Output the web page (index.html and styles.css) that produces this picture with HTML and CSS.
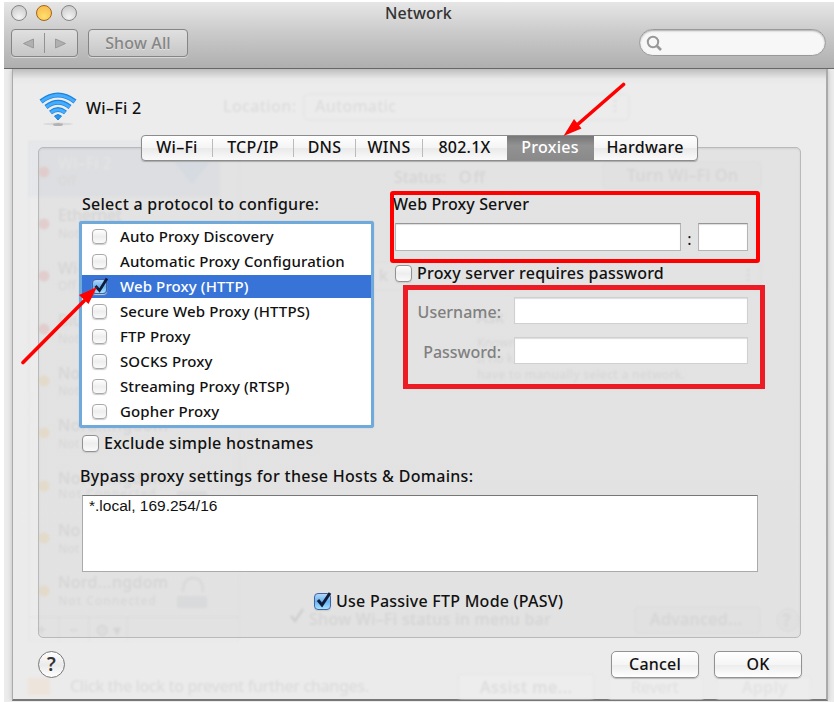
FILE: index.html
```html
<!DOCTYPE html>
<html lang="en">
<head>
<meta charset="utf-8">
<title>Network</title>
<link rel="stylesheet" href="styles.css">
</head>
<body>
<div class="window">
  <header class="titlebar">
    <div class="titlerow">
      <div class="lights"><i class="light"></i><i class="light amber"></i><i class="light"></i></div>
      <h1 class="title">Network</h1>
    </div>
    <div class="toolbar">
      <div class="toolbtn nav">
        <svg width="64" height="25" viewBox="0 0 64 25"><path d="M11.500 13.500l10-4.500v9z" fill="#b0b0b0" stroke="#999"/><path d="M32.500 3v20" stroke="#929292"/><path d="M53.500 13.500l-10-4.500v9z" fill="#b0b0b0" stroke="#999"/></svg>
      </div>
      <div class="toolbtn showall"><span>Show All</span></div>
      <div class="search">
        <svg width="18" height="18" viewBox="0 0 18 18" fill="none" stroke="#989898"><circle cx="7" cy="7" r="5.200" stroke-width="2"/><path d="M11 11l4 4" stroke-width="2.600"/></svg>
      </div>
    </div>
  </header>

  <main class="sheet">
    <svg class="ghost" width="815" height="631" viewBox="12 69 815 631">
      <g class="blur">
        <rect x="28" y="141" width="210" height="500" fill="none" stroke="#e3e3e3"/>
        <rect x="27" y="141" width="192" height="56" fill="#ccd5e2" opacity=".4"/>
        <rect x="303" y="94" width="325" height="26" rx="5" fill="none" stroke="#e2e2e2" stroke-width="2"/>
        <rect x="602" y="162" width="158" height="26" rx="4" fill="#eaeaea" stroke="#ddd"/>
        <rect x="300" y="262" width="460" height="28" rx="4" fill="none" stroke="#dfdfdf"/>
        <rect x="634" y="607" width="125" height="26" rx="4" fill="#eaeaea" stroke="#dcdcdc"/>
        <circle cx="787" cy="620" r="11" fill="#e8e8e8" stroke="#d8d8d8"/>
        <rect x="457" y="674" width="136" height="26" rx="4" fill="#efefef" stroke="#ddd"/>
        <rect x="608" y="676" width="94" height="26" rx="4" fill="#efefef" stroke="#e2e2e2"/>
        <rect x="716" y="676" width="94" height="26" rx="4" fill="#efefef" stroke="#e2e2e2"/>
        <path d="M28 617h210M58 617v24M88 617v24M126 617v24" stroke="#dadada"/>
        <path d="M173 162q18-13 36 0l-18 22z" fill="#c4d8e8" opacity=".6"/>
        <g fill="#eab3b3" opacity=".75"><circle cx="43" cy="172" r="5.500"/><circle cx="43" cy="224" r="5.500"/><circle cx="43" cy="276" r="5.500"/><circle cx="43" cy="329" r="5.500"/></g>
        <g fill="#eed6a9" opacity=".75"><circle cx="43" cy="381" r="5.500"/><circle cx="43" cy="433" r="5.500"/><circle cx="43" cy="486" r="5.500"/><circle cx="43" cy="538" r="5.500"/><circle cx="43" cy="591" r="5.500"/><rect x="27" y="678" width="22" height="17" fill="#f0d9c4"/></g>
        <g fill="#d9dbdf">
          <path d="M176 596h30v12h-30z"/><path d="M182 592q0-14 10-14t10 14" fill="none" stroke="#dcdcdc" stroke-width="3"/>
          <path d="M176 491h30v8h-30z"/>
          <path d="M290 616l4 5 8-12" fill="none" stroke="#c2c2c2" stroke-width="2.500"/>
        </g>
      </g>
      <g class="blurtext">
        <text x="222" y="112" textLength="73">Location:</text><text x="314" y="112" textLength="81">Automatic</text>
        <text x="612" y="112">⁝</text>
        <text x="393" y="183" textLength="52">Status:</text><text x="458" y="183" textLength="26">Off</text>
        <text x="626" y="181" textLength="111">Turn Wi–Fi On</text>
        <text x="57" y="169" fill="#eeeeee" textLength="54">Wi–Fi 2</text><text class="small" x="57" y="185" fill="#eee">Off</text>
        <text x="57" y="221" textLength="64">Ethernet</text><text class="small" x="57" y="238">Not</text>
        <text x="57" y="274">Wi–</text><text class="small" x="57" y="290">Off</text>
        <text x="57" y="326">Blu</text><text class="small" x="57" y="343">Not</text>
        <text x="57" y="379">No</text><text class="small" x="57" y="395">Not</text>
        <text x="57" y="431" textLength="110">Nord...ngdom</text><text class="small" x="57" y="448">Not</text>
        <text x="57" y="484" textLength="110">Nord...ngdom</text><text class="small" x="57" y="498" textLength="98">Not Connected</text>
        <text x="57" y="536">No</text><text class="small" x="57" y="553">Not</text>
        <text x="57" y="588" textLength="110">Nord...ngdom</text><text class="small" x="57" y="605" textLength="98">Not Connected</text>
        <text x="36" y="636">+</text><text x="68" y="636">−</text><text x="94" y="636">⚙ ▾</text>
        <text x="378" y="281">k</text><text x="745" y="281">⁝</text>
        <text x="476" y="323">Ask</text>
        <text class="small" x="476" y="347">Known</text>
        <text class="small" x="476" y="363">If no k</text>
        <text class="small" x="476" y="379" textLength="208">have to manually select a network.</text>
        <text x="308" y="625" textLength="242">Show Wi–Fi status in menu bar</text>
        <text x="649" y="625" textLength="92">Advanced...</text><text x="782" y="626">?</text>
        <text x="69" y="692" textLength="299">Click the lock to prevent further changes.</text>
        <text x="479" y="693" textLength="92">Assist me...</text>
        <text x="630" y="693" textLength="48" opacity=".6">Revert</text><text x="741" y="693" textLength="45" opacity=".6">Apply</text>
      </g>
    </svg>

    <div class="service">
      <svg width="40" height="38" viewBox="0 0 40 38" fill="none">
        <ellipse cx="20" cy="33" rx="15" ry="1.500" fill="#dadada"/><ellipse cx="20" cy="33.500" rx="5" ry="1.500" fill="#b2b2b2"/>
        <g stroke="#1e83dc" stroke-width="4.800"><path d="M3 10.500Q20-2.500 37 10.500"/><path d="M8 16Q20 6.500 32 16"/><path d="M12.500 21.500Q20 15.500 27.500 21.500"/></g>
        <g stroke="#43adff" stroke-width="3"><path d="M3.500 10.500Q20-2 36.500 10.500"/><path d="M8.500 16Q20 7 31.500 16"/><path d="M13 21.500Q20 16 27 21.500"/></g>
        <path d="M16.500 25q3.500-3 7 0L20 29z" fill="#2596f2" stroke="#1e83dc"/>
      </svg>
      <span class="svcname">Wi–Fi 2</span>
    </div>

    <section class="group">
      <nav class="tabs">
        <span class="tab t1">Wi–Fi</span><span class="tab t2">TCP/IP</span><span class="tab t3">DNS</span><span class="tab t4">WINS</span><span class="tab t5">802.1X</span><span class="tab t6 active">Proxies</span><span class="tab t7">Hardware</span>
      </nav>

      <div class="columns">
        <div class="protocols">
          <div class="label l-select">Select a protocol to configure:</div>
          <ul class="list">
            <li><i class="check"></i><span>Auto Proxy Discovery</span></li>
            <li><i class="check"></i><span>Automatic Proxy Configuration</span></li>
            <li class="selected"><i class="check on"><svg width="20" height="20" viewBox="0 0 20 20"><path d="M4.500 10l4 4.500 7.500-12" fill="none" stroke="#101d38" stroke-width="2.800"/></svg></i><span>Web Proxy (HTTP)</span></li>
            <li><i class="check"></i><span>Secure Web Proxy (HTTPS)</span></li>
            <li><i class="check"></i><span>FTP Proxy</span></li>
            <li><i class="check"></i><span>SOCKS Proxy</span></li>
            <li><i class="check"></i><span>Streaming Proxy (RTSP)</span></li>
            <li><i class="check"></i><span>Gopher Proxy</span></li>
          </ul>
        </div>
        <div class="settings">
          <div class="server">
            <div class="label l-server">Web Proxy Server</div>
            <div class="hostrow"><div class="field host"></div><span class="colon">:</span><div class="field port"></div></div>
          </div>
          <div class="option auth"><i class="check big"></i><span class="l-auth">Proxy server requires password</span></div>
          <div class="login">
            <div class="loginrow"><label>Username:</label><div class="field dim"></div></div>
            <div class="loginrow"><label>Password:</label><div class="field dim"></div></div>
          </div>
        </div>
      </div>

      <div class="option exclude"><i class="check big"></i><span class="l-excl">Exclude simple hostnames</span></div>
      <div class="label bypass">Bypass proxy settings for these Hosts &amp; Domains:</div>
      <div class="textarea">*.local, 169.254/16</div>
      <div class="option passive"><i class="check big on"><svg width="20" height="20" viewBox="0 0 20 20"><path d="M5 10l4 5 8-12" fill="none" stroke="#101d38" stroke-width="3"/></svg></i><span class="l-pasv">Use Passive FTP Mode (PASV)</span></div>
    </section>

    <footer class="actions">
      <div class="help">?</div>
      <div class="button">Cancel</div>
      <div class="button">OK</div>
    </footer>
  </main>
</div>

<svg class="arrows" width="834" height="702" viewBox="0 0 834 702" fill="#f00" stroke="#f00">
  <path d="M623.500 84.500L577 125M23 362.500L84 301" stroke-width="3.600" stroke-linecap="round"/>
  <path d="M563.500 136l10.500-17 7.500 9.500zM97 287l-8.500 17-9.500-9z" stroke="none"/>
</svg>
</body>
</html>
```

FILE: styles.css
```css
* { box-sizing: border-box; }
body {
  margin: 0; width: 834px; height: 702px; overflow: hidden; background: #fff; color: #111;
  font: 500 16px/20px "Noto Sans", "Open Sans", sans-serif; white-space: nowrap;
}
span { display: inline-block; }
.window { width: 830px; height: 700px; margin: 2px 0 0 4px; background: #ececec; }
.titlebar { height: 67px; background: linear-gradient(#e6e6e6, #cbcbcb 45%, #afafaf); border-bottom: 1px solid #676767; }
.titlerow { display: flex; height: 25px; }
.lights { display: flex; gap: 9px; padding: 3px 0 0 7px; width: 381px; }
.light { width: 16px; height: 16px; border: 1.5px solid #858585; border-radius: 50%; background: radial-gradient(circle at 50% 80%, #f4f4f4, #c4c4c4); }
.light.amber { border-color: #a46317; background: radial-gradient(circle at 50% 75%, #ffdf6d, #f5b54a); }
.title { margin: 0; font-size: 16px; font-weight: 500; line-height: 22px; color: #333; letter-spacing: .1px; }
.toolbar { display: flex; padding: 2px 0 0 7px; }
.toolbtn { height: 28px; border: 1px solid #858585; border-radius: 4px; background: linear-gradient(#e0e0e0, #c6c6c6); color: #858585; text-shadow: 0 1px #e3e3e3; box-shadow: 0 1px #d8d8d8; }
.nav { width: 67px; margin-right: 10px; }
.showall { width: 100px; text-align: center; line-height: 27px; letter-spacing: .15px; }
.search { width: 187px; height: 27px; margin: 0 0 0 451px; border: 1px solid #999; border-radius: 14px; background: #f7f7f7; box-shadow: inset 0 1px 2px #aaa; padding: 5px 0 0 6px; }

.sheet { position: relative; width: 816px; height: 632px; margin-left: 8px; background: linear-gradient(#bdbdbd, #e9e9e9 10px, #ececec 16px, #ebebeb); border: solid #aaa; border-width: 0 2px 2px 1px; border-bottom-color: #777; box-shadow: 0 0 5px #bbb; clip-path: inset(0 -9px); }
.ghost { position: absolute; left: 0; top: 0; opacity: .52; }
.ghost .blur { filter: blur(1.2px); }
.blurtext { filter: blur(.9px); fill: #cecece; font-size: 16px; }
.blurtext .small { font-size: 12px; fill: #d5d5d5; }
.service { position: relative; display: flex; align-items: center; height: 78px; padding: 0 0 0 25px; gap: 8px; }
.service svg { margin-top: 4px; }
.svcname { letter-spacing: .3px; }
.group { position: relative; width: 763px; height: 491px; margin-left: 25px; border: 1px solid #b9b9b9; border-radius: 5px; background: rgba(0,0,0,.035); box-shadow: inset 0 1px 2px rgba(0,0,0,.08); }
.tabs { display: flex; width: 557px; height: 26px; margin: -13px 0 0 102px; border: 1px solid #8c8c8c; border-radius: 4px; background: linear-gradient(#fff, #f4f4f4 50%, #eaeaea 52%, #fafafa); box-shadow: 0 1px 1px #aaa; }
.tab { text-align: center; line-height: 23px; letter-spacing: .25px; text-indent: -1px; background: linear-gradient(#bbb, #bbb) right / 1px 18px no-repeat; }
.t1 { width: 71px; } .t2 { width: 81px; } .t3 { width: 62px; } .t4 { width: 67px; } .t5 { width: 84px; background: none; } .t6 { width: 87px; } .t7 { width: 103px; background: none; }
.tab.active { background: linear-gradient(#777, #929292 40%, #8a8a8a); color: #fff; }

.columns { display: flex; height: 267px; padding-left: 40px; }
.protocols { width: 311px; padding-top: 33px; }
.protocols .label { padding-left: 3px; }
.l-select { letter-spacing: .27px; }
.settings .l-server { letter-spacing: .12px; text-indent: -1px; }
.l-auth { letter-spacing: .22px; }
.l-excl { letter-spacing: .29px; }
.bypass { letter-spacing: .3px; }
.l-pasv { letter-spacing: .24px; }
.list { list-style: none; width: 295px; height: 207px; margin: 7px 0 0; padding: 0; border: 3px solid #6faadb; border-radius: 3px; background: #fff; box-shadow: 0 0 1px #6faadb; }
.list li { display: flex; align-items: center; height: 25px; padding-left: 10px; font-size: 15px; letter-spacing: .12px; }
.list li span { margin: -2px 0 0 13px; }
.list .selected { background: linear-gradient(#3874d8, #3874d8) 0 1px / 100% 23px no-repeat; color: #fff; }
.check { display: block; flex: none; width: 15px; height: 15px; border: 1.5px solid #aaa; border-radius: 4px; background: linear-gradient(#fff, #eee 50%, #fafafa); box-shadow: 0 1px 1px #ccc; }
.check.big { width: 17px; height: 17px; border-color: #929292; }
.check.on { border-color: #4263a3; background: linear-gradient(#b4d6f8, #69b3f1 50%, #a7e2ff); }
.check svg { display: block; margin: -4px 0 0 -2px; overflow: visible; }
.settings { width: 371px; padding-top: 30px; }
.server { width: 370px; height: 72px; border: 4px solid #f00; border-radius: 3px; }
.server .label { height: 28px; line-height: 19px; }
.hostrow { display: flex; padding-left: 1px; }
.field { border: 1px solid #b5b5b5; border-top-color: #969696; background: #fff; height: 28px; box-shadow: inset 0 1px 1px #ddd; }
.host { width: 286px; } .port { width: 50px; }
.colon { width: 17px; text-align: center; line-height: 32px; font-weight: 400; }
.option { display: flex; align-items: center; gap: 5px; height: 20px; }
.auth { margin: 0 0 0 5px; }
.login { width: 362px; height: 104px; margin: 2px 0 0 13px; border: 5px solid #ed1c24; padding-top: 7px; }
.loginrow { display: flex; height: 40px; color: #808080; }
.loginrow label { width: 93px; text-align: right; line-height: 30px; }
.loginrow .field { width: 234px; height: 27px; margin-left: 13px; border-color: #d0d0d0; }
.exclude { margin: 5px 0 0 43px; }
.bypass { margin: 13px 0 0 41px; }
.textarea { width: 676px; height: 77px; margin: 9px 0 0 43px; padding: 0 6px; border: 1px solid #aaa; border-top-color: #777; background: #fff; font: 15.500px/19px "Liberation Sans", Arial, sans-serif; }
.passive { margin: 19px 0 0 275px; }
.actions { position: relative; display: flex; padding: 13px 0 0 25px; }
.help { width: 27px; height: 27px; border: 1.5px solid #777; border-radius: 50%; background: linear-gradient(#fff, #eaeaea 52%, #fff); text-align: center; font-size: 19px; font-weight: 600; line-height: 25px; color: #333; margin-right: 546px; }
.button { width: 88px; height: 27px; border: 1.5px solid #929292; border-radius: 5px; background: linear-gradient(#fff, #f5f5f5 50%, #ececec 52%, #fff); text-align: center; line-height: 24px; letter-spacing: .2px; box-shadow: 0 1px 1px #bbb; margin-right: 15px; }
.arrows { position: absolute; left: 0; top: 0; }
```
